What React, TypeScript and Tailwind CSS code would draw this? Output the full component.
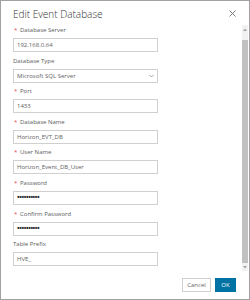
import React from 'react';

const fields = [
    { label: 'Database Server', value: '192.168.0.64', required: true },
    { label: 'Database Type', value: 'Microsoft SQL Server', select: true },
    { label: 'Port', value: '1433', required: true },
    { label: 'Database Name', value: 'Horizon_EVT_DB', required: true },
    { label: 'User Name', value: 'Horizon_Event_DB_User', required: true },
    { label: 'Password', value: '••••••••••', required: true, secret: true },
    { label: 'Confirm Password', value: '••••••••••', required: true, secret: true },
    { label: 'Table Prefix', value: 'HVE_' },
];

const font = { fontFamily: '"Open Sans", "Liberation Sans", sans-serif' };

export default function App() {
    return (
        <div
            style={font}
            className="w-[250px] h-[300px] bg-white border border-[#a2a2a2] flex flex-col overflow-hidden"
        >
            <div className="h-[24px] shrink-0 flex items-center justify-between pl-[12px] pr-[13px]">
                <h1 className="text-[10px] leading-[12px] font-light text-[#333] mt-[1px]">Edit Event Database</h1>
                <svg width="7" height="7" viewBox="0 0 7 7" className="text-[#6b6b6b]">
                    <path d="M0.5 0.5 L6.5 6.5 M6.5 0.5 L0.5 6.5" stroke="currentColor" strokeWidth="0.9" />
                </svg>
            </div>

            <div className="h-[246px] shrink-0 flex">
                <div className="flex-1 pl-[12px] pt-[1px] flex flex-col gap-[4.6px]">
                    {fields.map((f) => (
                        <div key={f.label} className="flex flex-col gap-[4px]">
                            <div className="h-[8px] flex items-center text-[6px] leading-[8px] text-[#5c5c5c] font-medium">
                                {f.required ? (
                                    <span className="text-[#e0484b] w-[7px] pl-[1px] text-[6px]">*</span>
                                ) : null}
                                <span>{f.label}</span>
                            </div>
                            <div className="w-[145px] h-[14px] border border-[#d0d0d0] bg-white flex items-center justify-between pl-[3px] pr-[3px]">
                                <span
                                    className={
                                        f.secret
                                            ? 'text-[7px] leading-[8px] font-bold text-[#2e2e2e] tracking-[-0.4px]'
                                            : 'text-[6px] leading-[8px] text-[#5e5e5e]'
                                    }
                                >
                                    {f.value}
                                </span>
                                {f.select ? (
                                    <svg width="5" height="4" viewBox="0 0 5 4" className="text-[#8a8a8a]">
                                        <path d="M0.5 1 L2.5 3 L4.5 1" stroke="currentColor" strokeWidth="0.8" fill="none" />
                                    </svg>
                                ) : null}
                            </div>
                        </div>
                    ))}
                </div>

                <div className="w-[6px] mr-[1px] bg-[#f1f1f1] flex flex-col items-center">
                    <div className="h-[8px] flex items-center justify-center">
                        <svg width="4" height="3" viewBox="0 0 4 3">
                            <path d="M0 3 L2 0.5 L4 3 Z" fill="#a3a3a3" />
                        </svg>
                    </div>
                    <div className="w-full mt-[7px] flex-1 bg-[#c1c1c1]" />
                    <div className="h-[8px] flex items-center justify-center">
                        <svg width="4" height="3" viewBox="0 0 4 3">
                            <path d="M0 0 L2 2.5 L4 0 Z" fill="#a3a3a3" />
                        </svg>
                    </div>
                </div>
            </div>

            <div className="flex-1 flex justify-end items-start pt-[7px] pr-[13px] gap-[4px]">
                <button className="w-[29px] h-[14px] border border-[#cfcfcf] bg-white text-[6px] text-[#666] flex items-center justify-center">
                    Cancel
                </button>
                <button className="w-[21px] h-[14px] bg-[#0072a3] text-[6px] text-white flex items-center justify-center">
                    OK
                </button>
            </div>
        </div>
    );
}
